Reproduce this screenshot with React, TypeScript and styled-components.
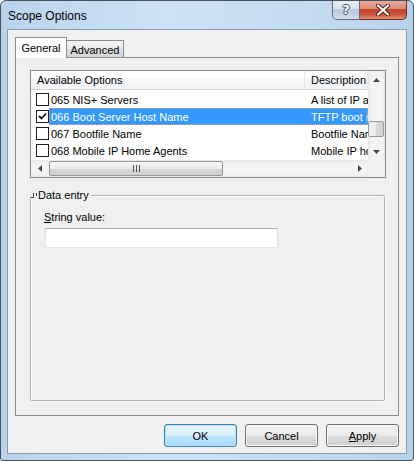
import React from 'react';
import styled, { createGlobalStyle, css } from 'styled-components';

const GlobalStyle = createGlobalStyle`
  html, body {
    margin: 0;
    padding: 0;
    background: #ffffff;
  }
  body {
    font-family: "Liberation Sans", Arial, sans-serif;
    font-size: 11px;
    color: #000;
  }
  * {
    box-sizing: border-box;
  }
`;

interface OptionRow {
  code: string;
  name: string;
  description: string;
  checked?: boolean;
  selected?: boolean;
}

const options: Array<OptionRow> = [
  { code: '065', name: 'NIS+ Servers', description: 'A list of IP addresses indicating NIS+ servers' },
  { code: '066', name: 'Boot Server Host Name', description: 'TFTP boot server host name', checked: true, selected: true },
  { code: '067', name: 'Bootfile Name', description: 'Bootfile Name' },
  { code: '068', name: 'Mobile IP Home Agents', description: 'Mobile IP home agents in priority order' },
];

const Window = styled.div`
  width: 414px;
  height: 461px;
  border: 1px solid #46525e;
  border-radius: 6px 6px 3px 3px;
  background: linear-gradient(90deg, #bad3ed 0%, #cde2f6 40%, #c6dcf2 70%, #b9d2ec 100%);
  padding: 0 6px 6px 6px;
  display: flex;
  flex-direction: column;
  overflow: hidden;
`;

const TitleBar = styled.div`
  height: 28px;
  display: flex;
  align-items: flex-start;
  justify-content: space-between;
`;

const Title = styled.div`
  font-size: 12px;
  line-height: 28px;
  padding: 1px 0 0 1px;
  color: #000;
`;

const CaptionButtons = styled.div`
  display: flex;
  margin-top: -1px;
`;

const CaptionButton = styled.div<{ $close?: boolean }>`
  height: 20px;
  display: flex;
  align-items: center;
  justify-content: center;
  border: 1px solid #5c6b7d;
  border-top: none;
  ${(p) =>
    p.$close
      ? css`
          width: 47px;
          border-color: #6e2a22;
          border-left: none;
          border-radius: 0 0 5px 0;
          background: linear-gradient(#eab0a2 0%, #d98a78 45%, #c4442d 50%, #c85a40 80%, #e2977c 100%);
        `
      : css`
          width: 28px;
          border-radius: 0 0 0 5px;
          background: linear-gradient(#e8eef5 0%, #d8e3ee 45%, #bccadb 50%, #c3d2e2 80%, #d6e3ef 100%);
        `}
`;

const HelpGlyph = styled.span`
  font-family: "DejaVu Sans", sans-serif;
  font-weight: bold;
  font-size: 13px;
  line-height: 1;
  color: #fff;
  text-shadow: 1px 0 0 #3f4e60, -1px 0 0 #3f4e60, 0 1px 0 #3f4e60, 0 -1px 0 #3f4e60;
`;

const Client = styled.div`
  flex: 1;
  border: 1px solid #8d9cae;
  background: #f0f0f0;
  padding: 7px 7px 0 7px;
  display: flex;
  flex-direction: column;
`;

const TabStrip = styled.div`
  height: 20px;
  display: flex;
  align-items: flex-end;
`;

const Tab = styled.div<{ $active?: boolean }>`
  border: 1px solid #898c95;
  border-bottom: none;
  display: flex;
  align-items: center;
  justify-content: center;
  ${(p) =>
    p.$active
      ? css`
          width: 52px;
          height: 21px;
          margin-bottom: -1px;
          background: #ffffff;
          position: relative;
          z-index: 1;
          padding-bottom: 1px;
        `
      : css`
          width: 58px;
          height: 17px;
          margin-left: -1px;
          background: linear-gradient(#f3f3f3 0%, #ebebeb 50%, #dddddd 51%, #d5d5d5 100%);
          padding-top: 1px;
        `}
`;

const Panel = styled.div`
  flex: 1;
  border: 1px solid #898c95;
  background: #f0f0f0;
  padding: 12px 12px 0 14px;
  display: flex;
  flex-direction: column;
`;

const ListView = styled.div`
  width: 356px;
  height: 108px;
  border: 1px solid #828790;
  background: #fff;
  display: grid;
  grid-template-columns: 337px 17px;
  grid-template-rows: 89px 17px;
`;

const ListBody = styled.div`
  overflow: hidden;
  min-width: 0;
  display: flex;
  flex-direction: column;
`;

const Header = styled.div`
  height: 19px;
  flex: none;
  display: flex;
  background: linear-gradient(#ffffff 0%, #ffffff 40%, #f7f8f9 41%, #f3f4f6 100%);
  border-bottom: 1px solid #d5d5d5;
`;

const HeaderCell = styled.div<{ $width?: number }>`
  ${(p) => (p.$width ? `width: ${p.$width}px; flex: none;` : 'flex: 1; min-width: 0;')}
  line-height: 18px;
  padding-left: 6px;
  white-space: nowrap;
  overflow: hidden;
  border-right: 1px solid #e3e8ee;
`;

const Rows = styled.div`
  padding-top: 1px;
`;

const Row = styled.div`
  height: 17px;
  display: flex;
  align-items: center;
`;

const CheckBox = styled.div`
  flex: none;
  width: 13px;
  height: 13px;
  margin: 0 0 0 5px;
  border: 1px solid #1f1f1f;
  background: #fff;
  display: flex;
  align-items: center;
  justify-content: center;
`;

const RowCells = styled.div<{ $selected?: boolean }>`
  flex: 1;
  min-width: 0;
  height: 17px;
  display: flex;
  align-items: center;
  white-space: nowrap;
  ${(p) =>
    p.$selected &&
    css`
      background: #3399ff;
      color: #fff;
      outline: 1px dotted #e8a060;
      outline-offset: -1px;
    `}
`;

const NameCell = styled.div`
  flex: none;
  width: 256px;
  padding-left: 2px;
  overflow: hidden;
`;

const DescCell = styled.div`
  flex: 1;
  min-width: 0;
  padding-left: 6px;
  overflow: hidden;
`;

const ScrollBar = styled.div<{ $vertical?: boolean }>`
  display: flex;
  flex-direction: ${(p) => (p.$vertical ? 'column' : 'row')};
  background: ${(p) =>
    p.$vertical
      ? 'linear-gradient(90deg, #e6e6e6 0%, #f4f4f4 20%, #f4f4f4 80%, #ececec 100%)'
      : 'linear-gradient(#e6e6e6 0%, #f4f4f4 20%, #f4f4f4 80%, #ececec 100%)'};
`;

const ArrowButton = styled.div`
  width: 17px;
  height: 17px;
  flex: none;
  display: flex;
  align-items: center;
  justify-content: center;
`;

const Track = styled.div<{ $vertical?: boolean }>`
  flex: 1;
  display: flex;
  flex-direction: ${(p) => (p.$vertical ? 'column' : 'row')};
  align-items: center;
`;

const Thumb = styled.div<{ $vertical?: boolean }>`
  border: 1px solid #979797;
  border-radius: 2px;
  display: flex;
  align-items: center;
  justify-content: center;
  ${(p) =>
    p.$vertical
      ? css`
          width: 16px;
          height: 16px;
          margin-left: -1px;
          background: linear-gradient(90deg, #f4f4f4 0%, #e9e9e9 50%, #d9d9d9 51%, #d0d0d0 100%);
        `
      : css`
          height: 15px;
          background: linear-gradient(#f4f4f4 0%, #e9e9e9 50%, #d9d9d9 51%, #d0d0d0 100%);
        `}
`;

const Grip = styled.div`
  width: 7px;
  height: 7px;
  background: repeating-linear-gradient(90deg, #4d4d4d 0 1px, transparent 1px 3px);
`;

const Corner = styled.div`
  background: #f0f0f0;
`;

const GroupBox = styled.fieldset`
  width: 355px;
  height: 212px;
  margin: 11px 0 0 0;
  padding: 0;
  border: 1px solid #aeb2b6;
  border-radius: 2px;
  box-shadow: inset 1px 1px 0 #ffffff, 1px 1px 0 #ffffff;
  min-width: 0;
`;

const Legend = styled.legend`
  padding: 0 2px 0 0;
  margin-left: 0;
  line-height: 13px;
  display: flex;
  align-items: center;
`;

const GroupBody = styled.div`
  padding: 9px 0 0 13px;
  display: flex;
  flex-direction: column;
`;

const FieldLabel = styled.label`
  line-height: 13px;
`;

const TextInput = styled.input`
  width: 233px;
  height: 20px;
  margin: 4px 0 0 1px;
  border: 1px solid;
  border-color: #abadb3 #dbdfe6 #e3e9ef #e2e3ea;
  background: #fff;
  font: inherit;
  padding: 0 2px;
  outline: none;
`;

const ButtonRow = styled.div`
  display: flex;
  justify-content: flex-end;
  gap: 8px;
  margin: 8px 0 6px 0;
`;

const Button = styled.button<{ $default?: boolean }>`
  width: 73px;
  height: 23px;
  font: inherit;
  color: #000;
  border-radius: 3px;
  padding: 0;
  ${(p) =>
    p.$default
      ? css`
          border: 1px solid #3c7fb1;
          background: linear-gradient(#eaf6fd 0%, #d9f0fc 50%, #bee6fd 51%, #a7d9f5 100%);
          box-shadow: inset 0 0 0 1px #b8e2f9;
        `
      : css`
          border: 1px solid #707070;
          background: linear-gradient(#f2f2f2 0%, #ebebeb 50%, #dddddd 51%, #cfcfcf 100%);
          box-shadow: inset 0 0 0 1px #fafafa;
        `}
`;

const Arrow: React.FC<{ dir: 'up' | 'down' | 'left' | 'right' }> = ({ dir }) => {
  const paths = {
    up: 'M0 4 L3.5 0 L7 4 Z',
    down: 'M0 0 L7 0 L3.5 4 Z',
    left: 'M4 0 L4 7 L0 3.5 Z',
    right: 'M0 0 L4 3.5 L0 7 Z',
  };
  const vertical = dir === 'up' || dir === 'down';
  return (
    <svg width={vertical ? 7 : 4} height={vertical ? 4 : 7} viewBox={vertical ? '0 0 7 4' : '0 0 4 7'}>
      <path d={paths[dir]} fill="#474747" />
    </svg>
  );
};

const CheckMark = () => (
  <svg width="9" height="9" viewBox="0 0 9 9">
    <path d="M1 4 L3.5 6.5 L8 1.5" fill="none" stroke="#1a1a1a" strokeWidth="1.8" />
  </svg>
);

const CloseGlyph = () => (
  <svg width="14" height="12" viewBox="0 0 14 12">
    <path d="M2 1.5 L12 10.5 M12 1.5 L2 10.5" stroke="#5a1f16" strokeWidth="4.2" strokeLinecap="round" />
    <path d="M2 1.5 L12 10.5 M12 1.5 L2 10.5" stroke="#ffffff" strokeWidth="2.2" strokeLinecap="round" />
  </svg>
);

const GroupCorner = () => (
  <svg width="7" height="7" viewBox="0 0 7 7">
    <path d="M0 5.5 H2.5 V1 M5.5 1 V4" fill="none" stroke="#3a3a3a" strokeWidth="1" />
  </svg>
);

export default function App() {
  return (
    <>
      <GlobalStyle />
      <Window>
        <TitleBar>
          <Title>Scope Options</Title>
          <CaptionButtons>
            <CaptionButton>
              <HelpGlyph>?</HelpGlyph>
            </CaptionButton>
            <CaptionButton $close>
              <CloseGlyph />
            </CaptionButton>
          </CaptionButtons>
        </TitleBar>
        <Client>
          <TabStrip>
            <Tab $active>General</Tab>
            <Tab>Advanced</Tab>
          </TabStrip>
          <Panel>
            <ListView>
              <ListBody>
                <Header>
                  <HeaderCell $width={274}>Available Options</HeaderCell>
                  <HeaderCell>Description</HeaderCell>
                </Header>
                <Rows>
                  {options.map((o) => (
                    <Row key={o.code}>
                      <CheckBox>{o.checked && <CheckMark />}</CheckBox>
                      <RowCells $selected={o.selected}>
                        <NameCell>
                          {o.code} {o.name}
                        </NameCell>
                        <DescCell>{o.description}</DescCell>
                      </RowCells>
                    </Row>
                  ))}
                </Rows>
              </ListBody>
              <ScrollBar $vertical>
                <ArrowButton>
                  <Arrow dir="up" />
                </ArrowButton>
                <Track $vertical>
                  <div style={{ height: 33 }} />
                  <Thumb $vertical />
                </Track>
                <ArrowButton>
                  <Arrow dir="down" />
                </ArrowButton>
              </ScrollBar>
              <ScrollBar>
                <ArrowButton>
                  <Arrow dir="left" />
                </ArrowButton>
                <Track>
                  <Thumb style={{ width: 174, marginLeft: 1 }}>
                    <Grip />
                  </Thumb>
                </Track>
                <ArrowButton>
                  <Arrow dir="right" />
                </ArrowButton>
              </ScrollBar>
              <Corner />
            </ListView>
            <GroupBox>
              <Legend>
                <GroupCorner />
                Data entry
              </Legend>
              <GroupBody>
                <FieldLabel>
                  <u>S</u>tring value:
                </FieldLabel>
                <TextInput type="text" />
              </GroupBody>
            </GroupBox>
          </Panel>
          <ButtonRow>
            <Button $default>OK</Button>
            <Button>Cancel</Button>
            <Button>
              <u>A</u>pply
            </Button>
          </ButtonRow>
        </Client>
      </Window>
    </>
  );
}
